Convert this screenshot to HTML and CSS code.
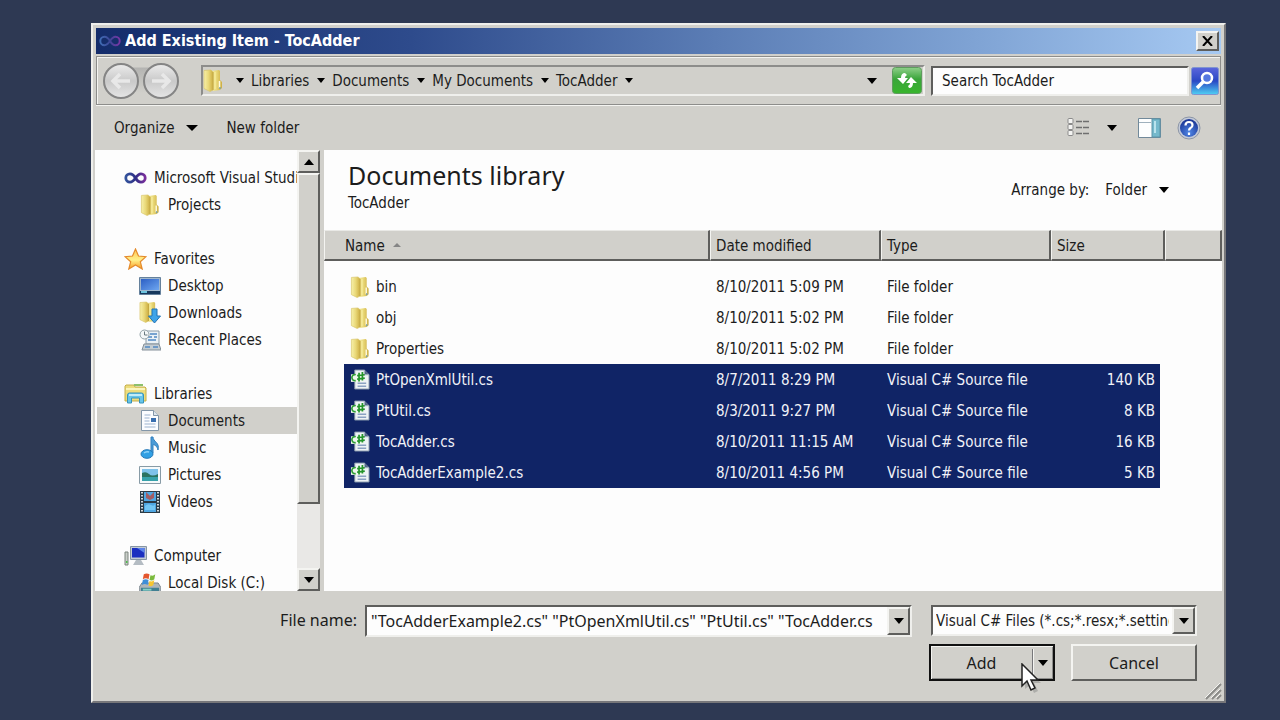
FILE: index.html
```html
<!DOCTYPE html>
<html lang="en">
<head>
<meta charset="utf-8">
<title>Add Existing Item - TocAdder</title>
<link rel="stylesheet" href="styles.css">
</head>
<body>
<svg class="defs" aria-hidden="true">
  <defs>
    <linearGradient id="gFold" x1="0" x2="1"><stop offset="0" stop-color="#f7f0a8"/><stop offset=".5" stop-color="#e9d878"/><stop offset="1" stop-color="#cdae42"/></linearGradient>
    <linearGradient id="gBtn" x1="0" x2="0" y1="0" y2="1"><stop offset="0" stop-color="#ececec"/><stop offset=".5" stop-color="#c9c9c9"/><stop offset="1" stop-color="#e6e6e6"/></linearGradient>
    <linearGradient id="gStar" x1="0" x2="0" y1="0" y2="1"><stop offset="0" stop-color="#ffc552"/><stop offset=".55" stop-color="#fff08a"/><stop offset="1" stop-color="#f79a22"/></linearGradient>
    <linearGradient id="gBlue" x1="0" x2="1" y1="0" y2="1"><stop offset="0" stop-color="#2c5fc4"/><stop offset="1" stop-color="#6ea6f0"/></linearGradient>
    <linearGradient id="gVs" x1="0" x2="1"><stop offset="0" stop-color="#33539c"/><stop offset=".5" stop-color="#2f2f86"/><stop offset="1" stop-color="#7a2f9c"/></linearGradient>
    <linearGradient id="gVsTitle" x1="0" x2="1"><stop offset="0" stop-color="#3f6cb4"/><stop offset=".5" stop-color="#3d4596"/><stop offset="1" stop-color="#7a35a4"/></linearGradient>
    <linearGradient id="gGreen" x1="0" x2="0" y1="0" y2="1"><stop offset="0" stop-color="#8fd08a"/><stop offset=".45" stop-color="#3aa53a"/><stop offset="1" stop-color="#38b52c"/></linearGradient>
    <linearGradient id="gFind" x1="0" x2="0" y1="0" y2="1"><stop offset="0" stop-color="#5b66dc"/><stop offset=".5" stop-color="#2a48c4"/><stop offset="1" stop-color="#4fd0f4"/></linearGradient>
    <radialGradient id="gHelp" cx=".5" cy=".75" r=".7"><stop offset="0" stop-color="#4f86e6"/><stop offset="1" stop-color="#1c3796"/></radialGradient>
    <symbol id="vs" viewBox="0 0 22 12"><path d="M11 6C9 2.500 7 1.800 5.500 1.800a4.200 4.200 0 0 0 0 8.400C7.500 10.200 9 9 11 6s3.500-4.200 5.500-4.200a4.200 4.200 0 0 1 0 8.400C14.500 10.200 13 9.500 11 6z" fill="none" stroke="url(#gVs)" stroke-width="2.800"/></symbol>
    <symbol id="folder" viewBox="0 0 20 23"><path d="M8 2l8-1 1 1v9l2 2v6l-2 2-7 1z" fill="url(#gFold)"/><path d="M1 1.500 8 1l2 2v18l-3 1.500-6-3z" fill="url(#gFold)" stroke="#d9c66a" stroke-width=".7"/><path d="M10 3v18" stroke="#c3a640"/><path d="M12 3v17" stroke="#f3e793" stroke-width="2"/><path d="M16.500 12v7" stroke="#fffbe0" stroke-width="1.500"/><path d="M17 18v2" stroke="#7aa0a8" stroke-width="1.500"/></symbol>
    <symbol id="star" viewBox="0 0 22 22"><path d="M11 1l3 7 7.500.700-5.700 5 1.900 7.300L11 17l-6.700 4 1.900-7.300-5.700-5L8 8z" fill="url(#gStar)" stroke="#e48a2b" stroke-width="1.200"/></symbol>
    <symbol id="desktop" viewBox="0 0 22 18"><path d="M.500.500h21v17H.500z" fill="#9fb6cc" stroke="#65819c"/><path d="M2 2h18v11H2z" fill="url(#gBlue)"/><path d="M1 14h20v3H1z" fill="#17385c"/><path d="M2 14h6v2H2z" fill="#6cc4de"/></symbol>
    <symbol id="down" viewBox="0 0 22 23"><use href="#folder" width="19" height="22"/><path d="M13 8h5v7h3.500l-6 7-6-7H13z" fill="#3fa4e8" stroke="#2374b4"/></symbol>
    <symbol id="recent" viewBox="0 0 22 22"><path d="M7 2h13v13H7z" fill="#eaf1f6" stroke="#8b9ca8"/><path d="M5 15h15l2 6H3z" fill="#c4cdd2" stroke="#859099"/><path d="M11 5h7M9 8h4M15 8h3M9 11h8M6 18h5M14 18h5" stroke="#5289c4" stroke-width="1.500"/><circle cx="5.500" cy="5.500" r="4.500" fill="#f4f7f8" stroke="#92a0a6"/><path d="M5.500 2.500v3.500h3" fill="none" stroke="#69797f"/></symbol>
    <symbol id="library" viewBox="0 0 23 20"><path d="M1 2l1-1h8l1 2h10l1 1v13H1z" fill="#eddd7c" stroke="#c5ae4a"/><path d="M2 5h19" stroke="#fbf5bd" stroke-width="2"/><path d="M10 1h9" stroke="#8dc06a" stroke-width="2"/><path d="M3.500 19v-8q0-2 2-2h12q2 0 2 2v8h-4v-5h-8v5z" fill="#68c6ea" stroke="#3793bb"/><path d="M5 11h13" stroke="#c0ecf8" stroke-width="2"/></symbol>
    <symbol id="doc" viewBox="0 0 19 21"><path d="M1 .500h12l5 5v15H1z" fill="#fbfdff" stroke="#8296a8"/><path d="M13 .500v5h5" fill="#dde6ec" stroke="#8296a8"/><path d="M4 5h6M4 8h5M4 11h5M4 14h11M4 17h11" stroke="#9cb3cf"/><path d="M10.500 8h5v4h-5z" fill="#386fb0"/></symbol>
    <symbol id="music" viewBox="0 0 20 23"><path d="M11 1h2c0 5 7 5 5 13-1-4-3-5-5-5.500V17h-2z" fill="#4a9bd6" stroke="#3180bf"/><ellipse cx="7" cy="18" rx="6" ry="4.300" fill="#32a0e4" stroke="#2579b8"/><path d="M4 17q2-2 5-1" fill="none" stroke="#91d3f8" stroke-width="1.500"/></symbol>
    <symbol id="picture" viewBox="0 0 22 18"><path d="M.500.500h21v17H.500z" fill="#f7fafb" stroke="#889ba6"/><path d="M3 3h16v12H3z" fill="#7fc2ea"/><path d="M3 7q4-2 7 1t9 0v3H3z" fill="#2c7360"/><path d="M3 11h16v4H3z" fill="#38a2aa"/></symbol>
    <symbol id="video" viewBox="0 0 20 22"><path d="M0 0h20v22H0z" fill="#2b3b46"/><path d="M4 1h12v9H4zM4 12h12v9H4z" fill="#4fa7e2"/><path d="M6 1l4 4 4-4v6l-4 2-4-2z" fill="#a25d63"/><path d="M5 15q3-3 6-1t4-1v6H5z" fill="#73c7f4"/><path d="M2 1v20M18 1v20" stroke="#e5edf0" stroke-width="1.800" stroke-dasharray="1.500 1.500"/></symbol>
    <symbol id="computer" viewBox="0 0 23 20"><path d="M1 6h3v13H1z" fill="#c9cec9" stroke="#7d857e"/><path d="M2 15h1.500v2H2z" fill="#50bd4d"/><path d="M6.500.500h16v13h-16z" fill="#c3cbd4" stroke="#8796a4"/><path d="M8 2h12.500v9.500H8z" fill="#1b2fc0"/><path d="M13 2h7.500v5z" fill="#5c84ea"/><path d="M12 14h5l3 5H9z" fill="#b4bcc3"/></symbol>
    <symbol id="disk" viewBox="0 0 23 21"><path d="M3 11h17l3 5v5H0v-5z" fill="#aeb5ba" stroke="#78828a"/><path d="M2 16h19v4H2z" fill="#417f92"/><path d="M4 18h9" stroke="#84d0c4" stroke-width="2"/><path d="M5 2q3-2 6 0l-1 5q-3-2-6 0z" fill="#e4572f"/><path d="M12 3q3 1 5-1l-1 5q-2 2-5 1z" fill="#7bba3d"/><path d="M4 8q3-2 6 0l-1 5q-3-2-6 0z" fill="#3e8ed8"/><path d="M11 9q3 1 5-1l-1 5q-2 2-5 1z" fill="#f6c530"/></symbol>
    <symbol id="cs" viewBox="0 0 21 22"><path d="M5 .500h10l5 5v15H5z" fill="#eef3f5" stroke="#8292a6"/><path d="M15 .500v5h5" fill="#526786" stroke="#a9b7c6"/><path d="M1 5h13v8H1z" fill="#eff7ee"/><path d="M6 5.500a3 3.200 0 1 0 0 6" fill="none" stroke="#309e36" stroke-width="1.800"/><path d="M9.500 3.500v9M13 2.500v9M7.500 6.500l8-1M7.500 10l8-1" stroke="#24942a" stroke-width="1.800"/><path d="M8 14.500h9M8 17.500h9" stroke="#8ba2c2" stroke-width="1.500"/></symbol>
  </defs>
</svg>

<main class="dialog">
  <header class="titlebar">
    <svg width="22" height="12" viewBox="0 0 22 12"><path d="M11 6C9 2.500 7 1.800 5.500 1.800a4.200 4.200 0 0 0 0 8.400C7.500 10.200 9 9 11 6s3.500-4.200 5.500-4.200a4.200 4.200 0 0 1 0 8.400C14.500 10.200 13 9.500 11 6z" fill="none" stroke="url(#gVsTitle)" stroke-width="2"/></svg>
    <h1 class="title">Add Existing Item - TocAdder</h1>
    <button class="close raised" type="button" aria-label="Close"><svg width="11" height="10" viewBox="0 0 11 10"><path d="M1 0l9 10M10 0L1 10" stroke="#000" stroke-width="2"/></svg></button>
  </header>

  <div class="navbar">
    <div class="history">
      <button class="plain round" type="button" aria-label="Back"><svg width="36" height="36" viewBox="0 0 36 36"><circle cx="18" cy="18" r="17" fill="url(#gBtn)" stroke="#858585" stroke-width="2"/><path d="M27 18H11M17 11l-7 7 7 7" fill="none" stroke="#e8e8e8" stroke-width="3.500"/></svg></button>
      <button class="plain round" type="button" aria-label="Forward"><svg width="36" height="36" viewBox="0 0 36 36"><circle cx="18" cy="18" r="17" fill="url(#gBtn)" stroke="#858585" stroke-width="2"/><path d="M9 18h16M19 11l7 7-7 7" fill="none" stroke="#e8e8e8" stroke-width="3.500"/></svg></button>
    </div>
    <nav class="address" aria-label="Address">
      <svg class="address-icon" width="20" height="23"><use href="#folder"/></svg>
      <i class="tri small"></i><a class="crumb" href="#">Libraries</a>
      <i class="tri small"></i><a class="crumb" href="#">Documents</a>
      <i class="tri small"></i><a class="crumb" href="#">My Documents</a>
      <i class="tri small"></i><a class="crumb" href="#">TocAdder</a>
      <i class="tri small"></i>
      <button class="plain history-drop" type="button" aria-label="Previous locations"><i class="tri"></i></button>
      <button class="plain" type="button" aria-label="Refresh"><svg width="30" height="27" viewBox="0 0 30 27"><rect x=".500" y=".500" width="29" height="26" rx="3" fill="url(#gGreen)" stroke="#5e9c5e"/><path d="M13 6q-4 0-4 5H5l6 6 5-6h-3q0-2 2-3zM17 21q4 0 4-5h4l-6-6-5 6h4q0 2-2 3z" fill="#fff"/></svg></button>
    </nav>
    <div class="search">
      <input class="search-input" type="text" aria-label="Search" value="Search TocAdder">
      <button class="plain" type="button" aria-label="Search"><svg width="28" height="28" viewBox="0 0 28 28"><rect x=".500" y=".500" width="27" height="27" rx="2" fill="url(#gFind)" stroke="#7f94d0"/><circle cx="16" cy="11" r="5" fill="#5578e0" stroke="#fff" stroke-width="2.500"/><path d="M12 15l-6 6" stroke="#fff" stroke-width="3.500"/></svg></button>
    </div>
  </div>

  <div class="toolbar">
    <button class="plain tool" type="button">Organize <i class="tri wide"></i></button>
    <button class="plain tool" type="button">New folder</button>
    <div class="tools">
      <button class="plain view" type="button" aria-label="Change view"><svg width="23" height="19" viewBox="0 0 23 19"><g fill="#f4f4f2" stroke="#8b8b8b"><rect x="1" y=".500" width="5" height="5" rx="1"/><rect x="1" y="6.500" width="5" height="5" rx="1"/><rect x="1" y="12.500" width="5" height="5" rx="1"/></g><path d="M9 3.500h6M16 3.500h6M9 9.500h6M16 9.500h6M9 15.500h6M16 15.500h6" stroke="#6f6f6f" stroke-width="1.300"/></svg><i class="tri"></i></button>
      <button class="plain" type="button" aria-label="Preview pane"><svg width="23" height="20" viewBox="0 0 23 20"><path d="M.500.500h22v19H.500z" fill="#fdfefe" stroke="#71899a"/><path d="M14 1h8v18h-8z" fill="#75b9cc" stroke="#5b94a8"/><path d="M16 3h2v12h-2z" fill="#b9e3ed"/><path d="M1 4.500h12" stroke="#9fb1bd"/></svg></button>
      <button class="plain" type="button" aria-label="Help"><svg width="24" height="24" viewBox="0 0 24 24"><circle cx="12" cy="12" r="11" fill="#c3cad8" stroke="#8d96a6"/><circle cx="12" cy="12" r="9" fill="url(#gHelp)"/><path d="M8.500 9.500q0-3.500 3.500-3.500t3.500 3q0 2-2 3-1.500 1-1.500 2.500M12 16.500v2.500" fill="none" stroke="#fff" stroke-width="2.200"/></svg></button>
    </div>
  </div>

  <div class="content">
    <aside class="sidebar">
      <ul class="tree">
        <li class="node"><svg width="23" height="12"><use href="#vs"/></svg>Microsoft Visual Studio</li>
        <li class="node child"><svg width="22" height="22"><use href="#folder"/></svg>Projects</li>
        <li class="node group"><svg width="23" height="22"><use href="#star"/></svg>Favorites</li>
        <li class="node child"><svg width="22" height="18"><use href="#desktop"/></svg>Desktop</li>
        <li class="node child"><svg width="22" height="23"><use href="#down"/></svg>Downloads</li>
        <li class="node child"><svg width="22" height="22"><use href="#recent"/></svg>Recent Places</li>
        <li class="node group"><svg width="23" height="20"><use href="#library"/></svg>Libraries</li>
        <li class="node child current"><svg width="22" height="21"><use href="#doc"/></svg>Documents</li>
        <li class="node child"><svg width="22" height="23"><use href="#music"/></svg>Music</li>
        <li class="node child"><svg width="22" height="18"><use href="#picture"/></svg>Pictures</li>
        <li class="node child"><svg width="22" height="22"><use href="#video"/></svg>Videos</li>
        <li class="node group"><svg width="23" height="20"><use href="#computer"/></svg>Computer</li>
        <li class="node child"><svg width="22" height="21"><use href="#disk"/></svg>Local Disk (C:)</li>
      </ul>
      <div class="scrollbar">
        <button class="scroll-btn raised" type="button" aria-label="Scroll up"><i class="tri up"></i></button>
        <div class="thumb raised"></div>
        <div class="track"></div>
        <button class="scroll-btn raised" type="button" aria-label="Scroll down"><i class="tri"></i></button>
      </div>
    </aside>

    <section class="files">
      <div class="lib-head">
        <div>
          <h2 class="lib-title">Documents library</h2>
          <p class="lib-sub">TocAdder</p>
        </div>
        <div class="arrange"><span>Arrange by:</span><button class="plain folder-by" type="button">Folder <i class="tri"></i></button></div>
      </div>
      <table class="list">
        <colgroup><col class="c-pad"><col><col class="c-date"><col class="c-type"><col class="c-size"><col class="c-gap"><col class="c-rest"></colgroup>
        <thead>
          <tr><th colspan="2" class="th-name">Name <i class="sort"></i></th><th>Date modified</th><th>Type</th><th colspan="2">Size</th><th></th></tr>
        </thead>
        <tbody>
          <tr><td></td><td class="name"><svg width="20" height="22"><use href="#folder"/></svg>bin</td><td>8/10/2011 5:09 PM</td><td>File folder</td><td></td></tr>
          <tr><td></td><td class="name"><svg width="20" height="22"><use href="#folder"/></svg>obj</td><td>8/10/2011 5:02 PM</td><td>File folder</td><td></td></tr>
          <tr><td></td><td class="name"><svg width="20" height="22"><use href="#folder"/></svg>Properties</td><td>8/10/2011 5:02 PM</td><td>File folder</td><td></td></tr>
          <tr class="selected"><td></td><td class="name"><svg width="20" height="22"><use href="#cs"/></svg>PtOpenXmlUtil.cs</td><td>8/7/2011 8:29 PM</td><td>Visual C# Source file</td><td class="size">140 KB</td></tr>
          <tr class="selected"><td></td><td class="name"><svg width="20" height="22"><use href="#cs"/></svg>PtUtil.cs</td><td>8/3/2011 9:27 PM</td><td>Visual C# Source file</td><td class="size">8 KB</td></tr>
          <tr class="selected"><td></td><td class="name"><svg width="20" height="22"><use href="#cs"/></svg>TocAdder.cs</td><td>8/10/2011 11:15 AM</td><td>Visual C# Source file</td><td class="size">16 KB</td></tr>
          <tr class="selected"><td></td><td class="name"><svg width="20" height="22"><use href="#cs"/></svg>TocAdderExample2.cs</td><td>8/10/2011 4:56 PM</td><td>Visual C# Source file</td><td class="size">5 KB</td></tr>
        </tbody>
      </table>
    </section>
  </div>

  <footer class="footer">
    <div class="fields">
      <label class="file-label" for="fname">File name:</label>
      <div class="combo">
        <input class="combo-field" id="fname" type="text" value="&quot;TocAdderExample2.cs&quot; &quot;PtOpenXmlUtil.cs&quot; &quot;PtUtil.cs&quot; &quot;TocAdder.cs">
        <button class="combo-btn raised" type="button" aria-label="Show file names"><i class="tri"></i></button>
      </div>
      <div class="combo filter">
        <select class="combo-field" aria-label="File type"><option>Visual C# Files (*.cs;*.resx;*.settings;*.xsd;*.wsdl)</option></select>
        <span class="combo-btn raised"><i class="tri"></i></span>
      </div>
    </div>
    <div class="actions">
      <div class="split">
        <button class="plain add" type="button">Add</button>
        <button class="plain add-drop" type="button" aria-label="More ways to add"><i class="tri"></i></button>
        <svg class="pointer" width="24" height="32" viewBox="0 0 24 32"><path d="M4 5v21l5-4 4 8 4-2-4-8h7z" fill="#777" opacity=".4"/><path d="M1 1v22l5-5 4 9 4-2-4-8h7z" fill="#fff" stroke="#222" stroke-width="1.500"/></svg>
      </div>
      <button class="cancel raised" type="button">Cancel</button>
    </div>
    <svg class="grip" width="18" height="18" viewBox="0 0 18 18"><path d="M2 17L17 2M8 17l9-9M13 17l4-4" stroke="#8b8b88" stroke-width="2"/><path d="M1 16L16 1M7 16l9-9M12 16l4-4" stroke="#f3f3f0"/></svg>
  </footer>
</main>
</body>
</html>
```
FILE: styles.css
```css
* { box-sizing: border-box; }

body {
  margin: 0;
  height: 100vh;
  padding: 23px 54px 17px 91px;
  display: flex;
  background: #2e3953;
  color: #1c1c1c;
  font: 15px/20px "DejaVu Sans Condensed", "Noto Sans", sans-serif;
}

button, input, select { font: inherit; color: inherit; margin: 0; }
h1, h2, p, ul { margin: 0; padding: 0; }
svg { display: block; flex: none; }
.defs { position: absolute; width: 0; height: 0; }

.dialog {
  flex: 1;
  min-width: 0;
  display: flex;
  flex-direction: column;
  background: #d1d0cb;
  border: 2px solid;
  border-color: #efefec #77777a #77777a #efefec;
  padding: 3px 2px 0;
}

.plain { border: 0; padding: 0; background: none; display: flex; align-items: center; }
.raised {
  background: #d1d0cb;
  border: 2px solid;
  border-color: #f4f4f1 #5e5e5c #5e5e5c #f4f4f1;
  padding: 0;
  display: flex;
  align-items: center;
  justify-content: center;
}

.tri { flex: none; border: 5px solid transparent; border-top: 6px solid #000; border-bottom: 0; }
.tri.small { border-width: 5px 4px 0; }
.tri.wide { border-width: 6px 6px 0; }
.tri.up { border-top: 0; border-bottom: 6px solid #000; }

.titlebar {
  display: flex;
  align-items: center;
  height: 26px;
  margin: 0 1px;
  padding: 0 2px 0 3px;
  gap: 4px;
  background: linear-gradient(90deg, #142c6a, #2e4b8c 28%, #5b7db5 55%, #7fa3d4 78%, #a6c9f2);
}
.title { flex: 1; color: #fff; font-size: 16px; font-weight: bold; line-height: 20px; }
.close { width: 23px; height: 20px; }

.navbar {
  display: flex;
  align-items: center;
  height: 49px;
  margin: 2px 1px 0;
  padding: 0 1px 0 6px;
  border: 1px solid #8d8d8b;
  box-shadow: inset 1px 1px #f4f4f1, 0 1px #f4f4f1;
}
.history { display: flex; gap: 4px; padding: 0; border-radius: 18px; background: linear-gradient(#d1d0cb 4px, #b4b4b2 5px, #d1d0cb 30px); }
.address {
  flex: 1;
  min-width: 0;
  display: flex;
  align-items: center;
  height: 31px;
  margin-left: 22px;
  padding-right: 1px;
  border: 2px solid;
  border-color: #8d8d8b #efefec #efefec #8d8d8b;
}
.address-icon { margin-right: 5px; }
.address .small { margin: 0 7px 0 8px; }
.crumb { color: inherit; text-decoration: none; white-space: nowrap; }
.history-drop { margin-left: auto; padding: 8px 15px; }
.search { display: flex; align-items: center; gap: 2px; width: 288px; margin-left: 6px; }
.search-input {
  flex: 1;
  min-width: 0;
  height: 30px;
  padding: 0 9px;
  background: #fdfdfd;
  border: 2px solid;
  border-color: #5e5e5c #efefec #efefec #5e5e5c;
}

.toolbar { display: flex; align-items: center; gap: 28px; height: 45px; padding: 0 21px 0 19px; }
.tool { gap: 12px; }
.tools { display: flex; align-items: center; gap: 16px; margin-left: auto; }
.view { gap: 17px; padding-right: 5px; }

.content { flex: 1; min-height: 0; display: flex; }
.sidebar { display: flex; width: 225px; background: #fdfdfd; overflow: hidden; }
.tree { flex: 1; min-width: 0; overflow: hidden; padding: 14px 0 0 2px; list-style: none; }
.node { display: flex; align-items: center; gap: 7px; height: 27px; padding-left: 27px; white-space: nowrap; }
.node.child { padding-left: 42px; }
.node.group { margin-top: 27px; }
.node.current { background: #d1d0cb; }
.scrollbar { display: flex; flex-direction: column; width: 23px; background: #e9e8e6; }
.scroll-btn { height: 23px; }
.thumb { flex: 330; }
.track { flex: 64; }

.files { flex: 1; min-width: 0; margin-left: 4px; background: #fdfdfd; overflow: hidden; }
.lib-head { display: flex; justify-content: space-between; height: 80px; padding: 8px 53px 0 24px; }
.lib-title { font: 25px/34px "Noto Sans", sans-serif; }
.lib-sub { line-height: 22px; }
.arrange { display: flex; align-items: center; gap: 16px; height: 20px; margin-top: 22px; }
.folder-by { gap: 12px; }

.list { width: 100%; table-layout: fixed; border-collapse: separate; border-spacing: 0; }
.c-pad { width: 20px; }
.c-date { width: 171px; }
.c-type { width: 170px; }
.c-size { width: 109px; }
.c-gap { width: 5px; }
.c-rest { width: 57px; }
.list th {
  height: 31px;
  padding: 2px 0 0 5px;
  text-align: left;
  font-weight: normal;
  background: #d1d0cb;
  border: solid;
  border-width: 1px 2px 2px 1px;
  border-color: #e9e9e6 #5e5e5c #5e5e5c #f4f4f1;
}
.list .th-name { padding-left: 20px; }
.sort { display: inline-block; vertical-align: 4px; margin-left: 4px; border: 4px solid transparent; border-top: 0; border-bottom: 4px solid #858585; }
.list tbody::before { content: ""; display: block; height: 10px; }
.list td { height: 31px; padding: 0 6px; white-space: nowrap; }
.list td:first-child { padding: 0; }
.list .name { padding-left: 6px; }
.name svg { display: inline-block; vertical-align: middle; margin-right: 6px; }
.list .size { text-align: right; padding-right: 5px; }
.selected td:not(:first-child) { background: #102466; color: #f0f2f8; }

.footer { position: relative; height: 110px; padding: 14px 25px 0 20px; font-family: "Noto Sans", sans-serif; font-size: 16px; }
.fields { display: flex; align-items: flex-start; }
.file-label { flex: 0 0 250px; text-align: right; line-height: 31px; padding-right: 8px; }
.combo {
  flex: 1;
  min-width: 0;
  display: flex;
  height: 32px;
  background: #fdfdfd;
  border: 2px solid;
  border-color: #5e5e5c #efefec #efefec #5e5e5c;
}
.combo-field {
  flex: 1;
  min-width: 0;
  padding: 0 0 0 4px;
  border: 0;
  background: none;
  appearance: none;
  overflow: hidden;
}
.combo-btn { width: 23px; }
.filter { flex: 0 0 266px; height: 31px; margin-left: 19px; }
.filter .combo-field { padding: 0 3px; font-family: "DejaVu Sans Condensed", "Noto Sans", sans-serif; font-size: 15px; }
.actions { display: flex; justify-content: flex-end; gap: 16px; margin-top: 7px; }
.split {
  position: relative;
  display: flex;
  width: 126px;
  height: 37px;
  border: 2px solid #111;
  box-shadow: inset 1px 1px #f4f4f1, inset -1px -1px #8d8d8b;
}
.add { flex: 1; justify-content: center; margin: 3px 0; border-right: 1px solid #77777a; box-shadow: 1px 0 #f4f4f1; }
.add-drop { width: 20px; justify-content: center; }
.pointer { position: absolute; left: 90px; top: 17px; }
.cancel { width: 126px; height: 37px; }
.grip { position: absolute; right: 0; bottom: 1px; }
```
